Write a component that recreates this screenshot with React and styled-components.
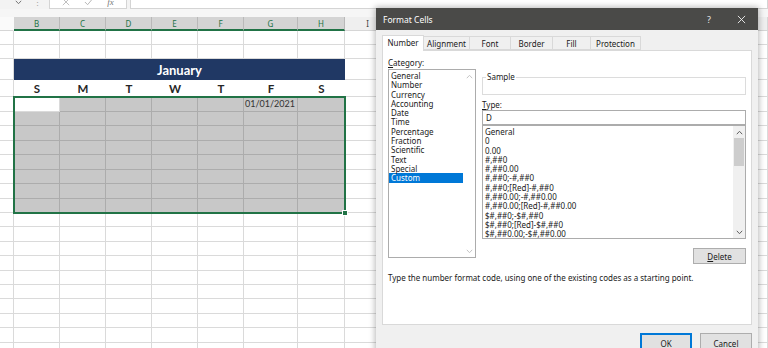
import React from 'react';
import styled, { createGlobalStyle } from 'styled-components';

const GlobalStyle = createGlobalStyle`
  html, body {
    margin: 0;
    padding: 0;
  }
  body {
    width: 768px;
    height: 348px;
    overflow: hidden;
    background: #fff;
    font-family: "Noto Sans", "Open Sans", sans-serif;
  }
  * {
    box-sizing: border-box;
  }
`;

const Screen = styled.div`
  position: relative;
  width: 768px;
  height: 348px;
  overflow: hidden;
  display: flex;
  flex-direction: column;
  background: #fff;
`;

/* formula bar strip at the very top (mostly scrolled out of view) */
const FormulaBar = styled.div`
  flex: none;
  height: 9px;
  display: flex;
  overflow: hidden;
  background: #f3f3f3;
`;

const BarBox = styled.div`
  height: 14px;
  margin-top: -5px;
  width: ${p => (p.$w ? `${p.$w}px` : 'auto')};
  flex: ${p => (p.$grow ? 1 : 'none')};
  margin-left: ${p => p.$gap || 0}px;
  display: flex;
  align-items: center;
  justify-content: ${p => p.$justify || 'flex-start'};
  gap: 14px;
  padding: 0 4px;
  background: ${p => (p.$plain ? 'transparent' : '#fff')};
  border: ${p => (p.$plain ? 'none' : '1px solid #d4d4d4')};
  color: #a8a8a8;
  font-size: 9px;
`;

const Fx = styled.span`
  font-family: "Liberation Serif", serif;
  font-style: italic;
  font-size: 9px;
  color: #777;
`;

const Band = styled.div`
  flex: none;
  height: 8px;
  background: #f6f6f6;
`;

const Sheet = styled.div`
  flex: none;
  display: grid;
  grid-template-columns: 14px repeat(5, 46px) 54px 47px 46px 1fr;
  grid-template-rows: 14px 14px 14px 21px 17px repeat(8, 14.5px) repeat(10, 14.4px);
  font-family: Lato, "Liberation Sans", sans-serif;
`;

const HeadCell = styled.div`
  display: flex;
  align-items: center;
  justify-content: center;
  font-family: "Noto Sans", sans-serif;
  font-size: 8px;
  color: ${p => (p.$sel ? '#217346' : '#444')};
  background: ${p => (p.$corner ? '#fafafa' : p.$sel ? '#d4d4d4' : '#efefef')};
  border-right: 1px solid ${p => (p.$corner ? 'transparent' : p.$sel ? '#b9b9b9' : '#d6d6d6')};
  border-bottom: ${p => (p.$sel ? '2px solid #217346' : '1px solid #d6d6d6')};
`;

const Cell = styled.div`
  display: flex;
  align-items: center;
  justify-content: flex-end;
  padding-right: 2px;
  font-size: 9px;
  color: #333;
  white-space: nowrap;
  background: ${p => (p.$sel ? '#c8c8c8' : '#fff')};
  border-right: 1px solid ${p => (p.$sel ? '#acacac' : '#dadada')};
  border-bottom: 1px solid ${p => (p.$sel ? '#acacac' : '#dadada')};
`;

const Banner = styled.div`
  grid-column: span 7;
  display: flex;
  align-items: center;
  justify-content: center;
  background: #203864;
  color: #fff;
  font-weight: 700;
  font-size: 13px;
`;

const Day = styled.div`
  display: flex;
  align-items: center;
  justify-content: center;
  background: #fff;
  color: #262626;
  font-weight: 700;
  font-size: 11.5px;
`;

/* the selected B:H block, 8 rows, with its green frame */
const Selection = styled.div`
  grid-column: span 7;
  grid-row: span 8;
  position: relative;
  display: grid;
  grid-template-columns: repeat(5, 46px) 54px 47px;
  grid-template-rows: repeat(8, 14.5px);
  outline: 2px solid #217346;
  outline-offset: -1px;
`;

const FillHandle = styled.span`
  position: absolute;
  right: -3px;
  bottom: -3px;
  width: 6px;
  height: 6px;
  background: #217346;
  border: 1px solid #fff;
`;

/* ---------- dialog ---------- */

const Dialog = styled.div`
  position: absolute;
  left: 376px;
  top: 8px;
  width: 382px;
  height: 350px;
  background: #f0f0f0;
  box-shadow: 0 0 6px 1px rgba(0, 0, 0, 0.28);
  display: flex;
  flex-direction: column;
  font-size: 8px;
  color: #1a1a1a;
`;

const TitleBar = styled.div`
  height: 22px;
  flex: none;
  display: flex;
  align-items: center;
  padding-left: 7px;
  background: #4a4a48;
  color: #fff;
  font-size: 8.5px;
`;

const TitleButtons = styled.div`
  margin-left: auto;
  display: flex;
  gap: 2px;
  padding-right: 2px;
`;

const TitleButton = styled.div`
  width: 30px;
  height: 22px;
  display: flex;
  align-items: center;
  justify-content: center;
  color: #e8e8e8;
  font-size: 9px;
`;

const Body = styled.div`
  padding: 6px 6px 0 6px;
  display: flex;
  flex-direction: column;
`;

const Tabs = styled.div`
  display: flex;
  height: 14px;
  align-items: flex-end;
  position: relative;
  z-index: 1;
`;

const Tab = styled.div`
  width: ${p => p.$w}px;
  height: ${p => (p.$active ? 16 : 14)}px;
  margin-bottom: ${p => (p.$active ? -1 : 0)}px;
  display: flex;
  align-items: center;
  justify-content: center;
  background: ${p => (p.$active ? '#fff' : '#f0f0f0')};
  border: 1px solid #d9d9d9;
  border-bottom: ${p => (p.$active ? 'none' : '1px solid #d9d9d9')};
  border-left: ${p => (p.$active || p.$first ? '1px solid #d9d9d9' : 'none')};
  padding-bottom: ${p => (p.$active ? 2 : 0)}px;
  font-size: 8px;
`;

const Panel = styled.div`
  height: 275px;
  background: #fff;
  border: 1px solid #d9d9d9;
  padding: 6px 5px 0 5px;
  display: flex;
  flex-direction: column;
`;

const Columns = styled.div`
  display: grid;
  grid-template-columns: 88px 264px;
  column-gap: 6px;
  align-items: start;
`;

const Column = styled.div`
  display: flex;
  flex-direction: column;
`;

const Label = styled.div`
  height: 11px;
  line-height: 11px;
  margin-top: ${p => p.$mt || 0}px;
  u {
    text-decoration-thickness: 0.5px;
    text-underline-offset: 1px;
  }
`;

const ListBox = styled.div`
  height: ${p => p.$h}px;
  margin-top: ${p => p.$mt || 0}px;
  border: 1px solid #acacac;
  background: #fff;
  display: flex;
  overflow: hidden;
`;

const Items = styled.div`
  flex: 1;
  padding-top: 1px;
  overflow: hidden;
`;

const Item = styled.div`
  height: 9.3px;
  line-height: 9.3px;
  padding-left: 2px;
  white-space: nowrap;
  background: ${p => (p.$selected ? '#0078d7' : 'transparent')};
  color: ${p => (p.$selected ? '#fff' : '#1a1a1a')};
`;

const Scrollbar = styled.div`
  width: 12px;
  flex: none;
  display: flex;
  flex-direction: column;
  align-items: center;
  background: ${p => (p.$track ? '#f0f0f0' : '#fff')};
`;

const ArrowSlot = styled.div`
  height: 12px;
  width: 12px;
  display: flex;
  align-items: center;
  justify-content: center;
  margin-top: ${p => (p.$bottom ? 'auto' : 0)};
`;

const Thumb = styled.div`
  width: 10px;
  height: 28px;
  background: #cdcdcd;
`;

const SampleBox = styled.fieldset`
  margin: 16px 0 0 0;
  padding: 0;
  height: 22px;
  border: 1px solid #dcdcdc;
  legend {
    margin-left: 3px;
    padding: 0 1px;
    font-size: 8px;
    line-height: 8px;
  }
`;

const TypeInput = styled.div`
  height: 15px;
  border: 1px solid #acacac;
  display: flex;
  align-items: center;
  padding-left: 3px;
  background: #fff;
`;

const Button = styled.div`
  width: ${p => p.$w || 53}px;
  height: ${p => p.$h || 16}px;
  display: flex;
  align-items: center;
  justify-content: center;
  background: #e1e1e1;
  border: 1px solid ${p => (p.$default ? '#0078d7' : '#adadad')};
  box-shadow: ${p => (p.$default ? 'inset 0 0 0 1px #0078d7' : 'none')};
  align-self: ${p => p.$align || 'auto'};
  margin-top: ${p => p.$mt || 0}px;
  font-size: 8px;
  u {
    text-decoration-thickness: 0.5px;
    text-underline-offset: 1px;
  }
`;

const Hint = styled.div`
  margin-top: 8px;
  line-height: 11px;
  white-space: nowrap;
`;

const Footer = styled.div`
  display: flex;
  justify-content: flex-end;
  gap: 8px;
  margin-top: 8px;
`;

const Chevron = ({ up, color }) => (
  <svg width="7" height="5" viewBox="0 0 7 5">
    <path
      d={up ? 'M0.8 4.2 L3.5 1.3 L6.2 4.2' : 'M0.8 0.8 L3.5 3.7 L6.2 0.8'}
      fill="none"
      stroke={color}
      strokeWidth="1"
    />
  </svg>
);

const CloseGlyph = ({ size = 9, color = '#fff', width = 1 }) => (
  <svg width={size} height={size} viewBox="0 0 10 10">
    <path d="M1 1 L9 9 M9 1 L1 9" stroke={color} strokeWidth={width} fill="none" />
  </svg>
);

const CheckGlyph = () => (
  <svg width="9" height="8" viewBox="0 0 10 8">
    <path d="M1 4 L4 7 L9 1" stroke="#b0b0b0" strokeWidth="1" fill="none" />
  </svg>
);

const columns = ['B', 'C', 'D', 'E', 'F', 'G', 'H'];
const days = ['S', 'M', 'T', 'W', 'T', 'F', 'S'];
const categories = [
  'General', 'Number', 'Currency', 'Accounting', 'Date', 'Time',
  'Percentage', 'Fraction', 'Scientific', 'Text', 'Special', 'Custom',
];
const formats = [
  'General', '0', '0.00', '#,##0', '#,##0.00', '#,##0;-#,##0',
  '#,##0;[Red]-#,##0', '#,##0.00;-#,##0.00', '#,##0.00;[Red]-#,##0.00',
  '$#,##0;-$#,##0', '$#,##0;[Red]-$#,##0', '$#,##0.00;-$#,##0.00',
  '$#,##0.00;[Red]-$#,##0.00',
];
const tabs = [
  ['Number', 42], ['Alignment', 46], ['Font', 41], ['Border', 42],
  ['Fill', 38], ['Protection', 50],
];

const PlainRow = () => (
  <>
    {Array.from({ length: 10 }, (_, c) => <Cell key={c} />)}
  </>
);

const App = () => {
  return (
    <>
      <GlobalStyle />
      <Screen>
        <FormulaBar>
          <BarBox $w={26} $justify="flex-end" $plain>
            <Chevron color="#777" />
          </BarBox>
          <BarBox $w={23} $justify="center" $plain>⋮</BarBox>
          <BarBox $w={78} $justify="center">
            <CloseGlyph size={8} color="#b0b0b0" />
            <CheckGlyph />
            <Fx>fx</Fx>
          </BarBox>
          <BarBox $grow $gap={3} />
        </FormulaBar>
        <Band />

        <Sheet>
          <HeadCell $corner />
          {columns.map(c => <HeadCell key={c} $sel>{c}</HeadCell>)}
          <HeadCell>I</HeadCell>
          <HeadCell />

          <PlainRow />
          <PlainRow />

          <Cell />
          <Banner>January</Banner>
          <Cell />
          <Cell />

          <Cell />
          {days.map((d, i) => <Day key={i}>{d}</Day>)}
          <Cell />
          <Cell />

          {/* rows 5-12: column A, the selected block, then I and J */}
          <Cell />
          <Selection>
            {Array.from({ length: 8 }, (_, r) =>
              columns.map((c, i) => (
                <Cell key={`${r}-${c}`} $sel={!(r === 0 && i === 0)}>
                  {r === 0 && c === 'G' ? '01/01/2021' : null}
                </Cell>
              ))
            )}
            <FillHandle />
          </Selection>
          <Cell />
          <Cell />
          {Array.from({ length: 7 }, (_, r) => (
            <React.Fragment key={`side-${r}`}>
              <Cell />
              <Cell />
              <Cell />
            </React.Fragment>
          ))}

          {Array.from({ length: 10 }, (_, r) => <PlainRow key={`p-${r}`} />)}
        </Sheet>

        <Dialog>
          <TitleBar>
            Format Cells
            <TitleButtons>
              <TitleButton>?</TitleButton>
              <TitleButton><CloseGlyph size={9} color="#f2f2f2" /></TitleButton>
            </TitleButtons>
          </TitleBar>

          <Body>
            <Tabs>
              {tabs.map(([name, w], i) => (
                <Tab key={name} $w={w} $active={i === 0} $first={i === 0}>{name}</Tab>
              ))}
            </Tabs>

            <Panel>
              <Columns>
                <Column>
                  <Label><u>C</u>ategory:</Label>
                  <ListBox $h={189} $mt={1}>
                    <Items>
                      {categories.map(c => (
                        <Item key={c} $selected={c === 'Custom'}>{c}</Item>
                      ))}
                    </Items>
                    <Scrollbar>
                      <ArrowSlot><Chevron up color="#c4c4c4" /></ArrowSlot>
                      <ArrowSlot $bottom><Chevron color="#c4c4c4" /></ArrowSlot>
                    </Scrollbar>
                  </ListBox>
                </Column>

                <Column>
                  <SampleBox>
                    <legend>Sample</legend>
                  </SampleBox>
                  <Label $mt={4}><u>T</u>ype:</Label>
                  <TypeInput>D</TypeInput>
                  <ListBox $h={114}>
                    <Items>
                      {formats.map(f => <Item key={f}>{f}</Item>)}
                    </Items>
                    <Scrollbar $track>
                      <ArrowSlot><Chevron up color="#606060" /></ArrowSlot>
                      <Thumb />
                      <ArrowSlot $bottom><Chevron color="#606060" /></ArrowSlot>
                    </Scrollbar>
                  </ListBox>
                  <Button $align="flex-end" $mt={9}><u>D</u>elete</Button>
                </Column>
              </Columns>
              <Hint>Type the number format code, using one of the existing codes as a starting point.</Hint>
            </Panel>

            <Footer>
              <Button $w={52} $h={20} $default>OK</Button>
              <Button $w={52} $h={20}>Cancel</Button>
            </Footer>
          </Body>
        </Dialog>
      </Screen>
    </>
  );
};

export default App;
